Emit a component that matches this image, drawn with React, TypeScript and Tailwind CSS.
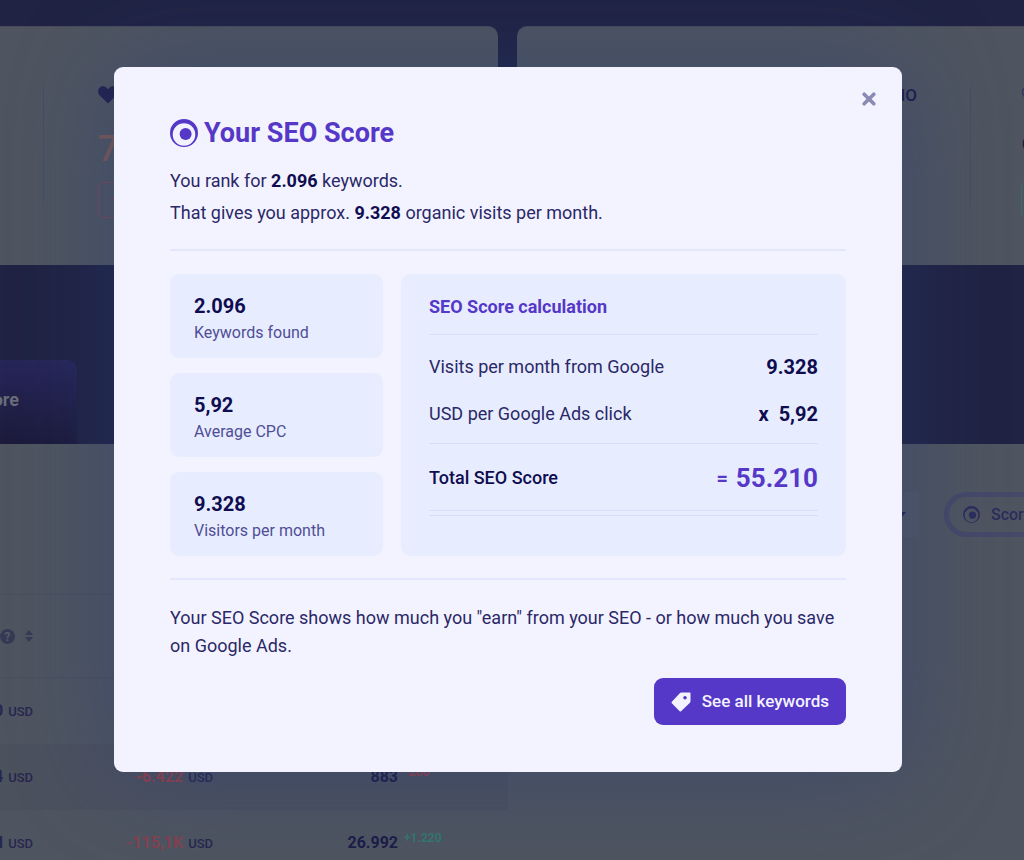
import React from "react";

function ScoreIcon({ className }: { className?: string }) {
  return (
    <svg viewBox="0 0 28 28" className={className} fill="currentColor" aria-hidden="true">
      <path
        fillRule="evenodd"
        d="M14 0a14 14 0 1 1 0 28a14 14 0 0 1 0-28zM14 4.200a11.300 11.300 0 1 0 0 22.600a11.300 11.300 0 0 0 0-22.600z"
      />
      <circle cx="15.600" cy="15" r="6" />
    </svg>
  );
}

function HeartIcon() {
  return (
    <svg viewBox="0 0 20 18" className="h-[18px] w-5" aria-hidden="true">
      <path
        d="M10 17.500L1.600 9.200C-.4 7-.4 3.800 1.600 1.800C3.600-.2 6.800-.1 8.700 1.900L10 3.200l1.300-1.300c1.900-2 5.100-2.100 7.100-.1s2 5.200 0 7.400z"
        fill="#22224c"
      />
    </svg>
  );
}

function CloseIcon() {
  return (
    <svg viewBox="0 0 14 14" className="size-3.5" stroke="currentColor" strokeWidth="3.600" strokeLinecap="round" aria-hidden="true">
      <path d="M2.200 2.200l9.600 9.600M11.800 2.200l-9.600 9.600" />
    </svg>
  );
}

function TagIcon() {
  return (
    <svg viewBox="0 0 20 20" className="size-5" fill="currentColor" aria-hidden="true">
      <path
        fillRule="evenodd"
        d="M10.400.5H18.900a.6.6 0 0 1 .6.600V9.300a2 2 0 0 1-.6 1.400L10.100 19.200a1 1 0 0 1-1.400 0L.8 11.200a1 1 0 0 1 0-1.400L9 1.100a2 2 0 0 1 1.400-.6zM14 4a1.800 1.800 0 1 0 0 3.600a1.800 1.800 0 0 0 0-3.600z"
      />
    </svg>
  );
}

function BulbIcon() {
  return (
    <svg viewBox="0 0 14 18" className="h-[18px] w-3.5 shrink-0" fill="none" stroke="#34365e" strokeWidth="1.500" aria-hidden="true">
      <path d="M4 12.500C4 10 1.500 9.500 1.500 6a5.500 5.500 0 0 1 11 0c0 3.500-2.500 4-2.500 6.500zM4.500 16h5" />
    </svg>
  );
}

const stats = [
  { value: "2.096", label: "Keywords found" },
  { value: "5,92", label: "Average CPC" },
  { value: "9.328", label: "Visitors per month" },
];

const rows = [
  { price: "0", change: "", traffic: "", delta: "", changeTone: "", deltaTone: "" },
  { price: "4", change: "-6.422", traffic: "883", delta: "-266", changeTone: "text-[#94414a]", deltaTone: "text-[#94414a]" },
  { price: "M", change: "-115,1K", traffic: "26.992", delta: "+1.220", changeTone: "text-[#84424f]", deltaTone: "text-[#34786e]" },
];

function Backdrop() {
  return (
    <div className="min-h-screen bg-[#4f5560] text-[#1c1c48]">
      <header className="grid grid-cols-[498px_1fr] gap-[19px] bg-[#202343] pt-[26px]">
        <section className="flex h-[239px] gap-[54px] rounded-tr-[10px] border-t border-[#484b5c] bg-[#4f5560] pl-[43px] pt-[59px]">
          <div className="h-[120px] w-px bg-[#484d62]" />
          <div className="flex flex-col items-start">
            <HeartIcon />
            <span className="mt-5 text-4xl font-medium leading-[50px] text-[#7c5a54]">7</span>
            <span className="mt-2 h-9 w-24 rounded-[5px] border border-[#7c4a5c] px-2.5 text-base leading-[34px] text-[#7c4a5c]">
              –
            </span>
          </div>
        </section>
        <section className="flex h-[239px] overflow-hidden rounded-tl-[10px] border-t border-[#484b5c] bg-[#4f5560] pt-[59px]">
          <div className="w-[400px] shrink-0 text-right text-[17px] font-medium leading-[18px]">RATIO</div>
          <div className="ml-[53px] h-[120px] w-px shrink-0 bg-[#484d62]" />
          <div className="ml-[50px] flex shrink-0 flex-col items-start">
            <BulbIcon />
            <span className="mt-5 text-4xl font-medium leading-[50px] text-[#1c1c48]">9</span>
            <span className="mt-2 h-9 w-24 rounded-[5px] border border-[#3f6a70]" />
          </div>
        </section>
      </header>

      <nav className="flex h-[179px] items-end bg-[#202343]">
        <div className="flex h-[84px] w-[77px] justify-end rounded-tr-[10px] bg-linear-to-b from-[#27265a] to-[#1c1b3b] pr-[58px] pt-7 text-lg font-bold leading-6 text-[#686d78]">
          Score
        </div>
      </nav>

      <div className="flex h-[150px] justify-end overflow-hidden pt-12">
        <div className="flex h-[45px] w-40 items-center justify-end bg-[#525864] pr-[13px]">
          <svg viewBox="0 0 10 6" className="h-1.5 w-2.5" fill="#20205c" aria-hidden="true">
            <path d="M0 0h10L5 6z" />
          </svg>
        </div>
        <div className="ml-[25px] w-20 shrink-0">
          <div className="flex h-[45px] w-32 items-center gap-[11px] rounded-full border-[5px] border-[#464968] pl-3.5 text-base font-medium text-[#2c2d5c]">
            <ScoreIcon className="size-[17px] shrink-0" />
            Score
          </div>
        </div>
      </div>

      <table className="w-[508px] table-fixed border-collapse">
        <colgroup>
          <col className="w-[33px]" />
          <col className="w-[180px]" />
          <col className="w-[185px]" />
          <col />
        </colgroup>
        <thead>
          <tr className="h-[83px] border-y border-[#494f60]">
            <th colSpan={4} className="p-0">
              <div className="flex items-center gap-2.5">
                <span className="grid size-[15px] place-items-center rounded-full bg-[#373a54] text-xs font-bold text-[#565c6a]">?</span>
                <svg viewBox="0 0 8 12" className="h-3 w-2" fill="#373a54" aria-hidden="true">
                  <path d="M4 0l4 5H0zM4 12L0 7h8z" />
                </svg>
              </div>
            </th>
          </tr>
        </thead>
        <tbody>
          {rows.map((row) => (
            <tr key={row.price} className="h-[66px] whitespace-nowrap even:bg-[#4c515e]">
              <td className="p-0">
                <div className="flex items-baseline justify-end gap-[5px] text-[13px] font-medium text-[#26274f]">
                  <span className="text-base font-bold">{row.price}</span>USD
                </div>
              </td>
              <td className="p-0">
                {row.change && (
                  <div className="flex items-baseline justify-end gap-[5px] text-[13px] font-medium text-[#26274f]">
                    <span className={`text-base font-bold ${row.changeTone}`}>{row.change}</span>USD
                  </div>
                )}
              </td>
              <td className="p-0 text-right text-base font-bold">{row.traffic}</td>
              <td className={`p-0 pb-2.5 pl-1.5 text-xs font-bold ${row.deltaTone}`}>{row.delta}</td>
            </tr>
          ))}
        </tbody>
      </table>
    </div>
  );
}

function ScoreDialog() {
  return (
    <div
      role="dialog"
      aria-modal="true"
      aria-labelledby="score-title"
      className="relative w-full max-w-[788px] rounded-[9px] bg-[#f3f3ff] px-14 pb-[47px] pt-12 text-lg text-[#2a2867] shadow-[0_0_100px_rgba(40,60,122,0.48)]"
    >
      <button type="button" aria-label="Close" className="absolute right-[26px] top-[25px] text-[#8a8ab4]">
        <CloseIcon />
      </button>

      <h1 id="score-title" className="flex items-center gap-1.5 text-[27px] font-bold leading-9 text-[#5538c8]">
        <ScoreIcon className="size-7" />
        Your SEO Score
      </h1>
      <div className="mt-3.5 leading-8">
        <p>
          You rank for <strong className="font-bold text-[#100c50]">2.096</strong> keywords.
        </p>
        <p>
          That gives you approx. <strong className="font-bold text-[#100c50]">9.328</strong> organic visits per month.
        </p>
      </div>

      <div className="mt-5 grid grid-cols-[213px_1fr] gap-[18px] border-y-2 border-[#e4e6fc] pb-[22px] pt-[23px]">
        <div className="flex flex-col gap-[15px]">
          {stats.map((stat) => (
            <div key={stat.label} className="h-[84px] rounded-[9px] bg-[#e7edff] px-6 pt-[18px]">
              <div className="text-xl font-bold leading-7 text-[#100c50]">{stat.value}</div>
              <div className="text-base leading-[26px] text-[#504d96]">{stat.label}</div>
            </div>
          ))}
        </div>

        <section className="rounded-[9px] bg-[#e7edff] px-7 pt-[19px]">
          <h2 className="border-b border-[#d9ddfb] pb-[13px] text-lg font-bold leading-7 text-[#5538c8]">
            SEO Score calculation
          </h2>
          <dl>
            <div className="mt-2 flex h-12 items-center justify-between">
              <dt>Visits per month from Google</dt>
              <dd className="text-xl font-bold text-[#100c50]">9.328</dd>
            </div>
            <div className="flex h-[53px] items-start justify-between border-b border-[#d9ddfb] pt-[9px]">
              <dt>USD per Google Ads click</dt>
              <dd className="flex gap-2.5 text-xl font-bold text-[#100c50]">
                <span>x</span>5,92
              </dd>
            </div>
            <div className="flex h-[67px] items-center justify-between border-b border-[#d9ddfb] pt-0.5">
              <dt className="font-medium text-[#100c50]">Total SEO Score</dt>
              <dd className="flex items-center gap-2 text-[26px] font-bold text-[#5538c8]">
                <span className="text-xl">=</span>55.210
              </dd>
            </div>
          </dl>
          <div className="h-[5px] border-b border-[#d9ddfb]" />
        </section>
      </div>

      <p className="mt-6 leading-7">
        Your SEO Score shows how much you "earn" from your SEO - or how much you save on Google Ads.
      </p>
      <div className="mt-[18px] flex justify-end">
        <button
          type="button"
          className="flex h-[47px] items-center gap-[11px] rounded-[9px] bg-[#5538c8] px-[17px] text-[17px] font-medium text-[#f3f3ff]"
        >
          <TagIcon />
          See all keywords
        </button>
      </div>
    </div>
  );
}

export default function App() {
  return (
    <div className="relative h-screen overflow-hidden font-['Roboto',sans-serif]">
      <Backdrop />
      <div className="absolute inset-0 flex items-start justify-center pr-2 pt-[67px]">
        <ScoreDialog />
      </div>
    </div>
  );
}
